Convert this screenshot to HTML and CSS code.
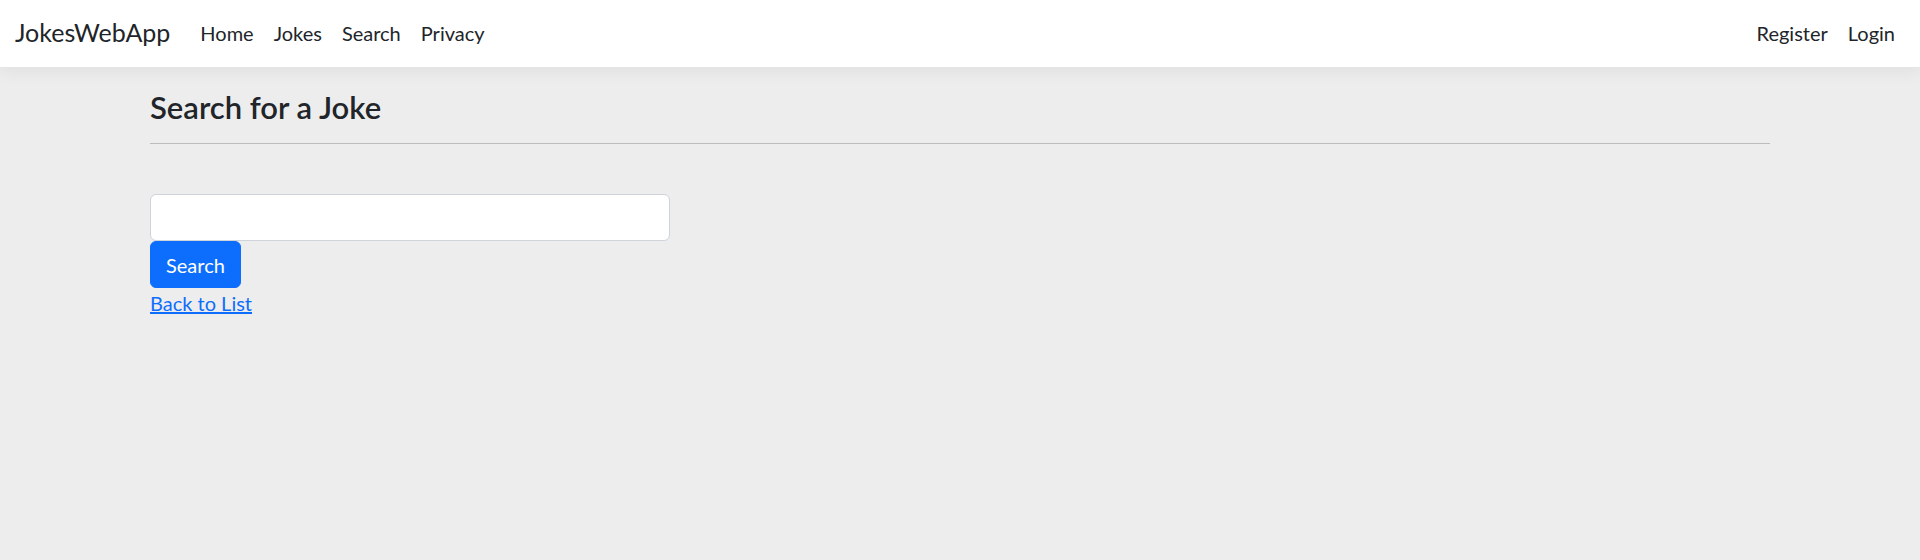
FILE: index.html
```html
<!DOCTYPE html>
<html lang="en">
<head>
<meta charset="utf-8">
<title>Search - JokesWebApp</title>
<link rel="stylesheet" href="styles.css">
</head>
<body>
<header class="navbar">
  <a class="brand" href="#">JokesWebApp</a>
  <nav class="nav-main">
    <a class="nav-link" href="#">Home</a>
    <a class="nav-link" href="#">Jokes</a>
    <a class="nav-link" href="#">Search</a>
    <a class="nav-link" href="#">Privacy</a>
  </nav>
  <nav class="nav-user">
    <a class="nav-link" href="#">Register</a>
    <a class="nav-link" href="#">Login</a>
  </nav>
</header>
<main class="container">
  <h4 class="title">Search for a Joke</h4>
  <hr class="rule">
  <form class="search-form">
    <input class="form-control" type="text" name="SearchPhrase">
    <button class="btn-primary" type="submit">Search</button>
  </form>
  <a class="back-link" href="#">Back to List</a>
</main>
</body>
</html>
```

FILE: styles.css
```css
* { box-sizing: border-box; }
html, body { margin: 0; padding: 0; }
body {
  background: #ededed;
  color: #212529;
  font-family: "Segoe UI", Lato, "Liberation Sans", Arial, sans-serif;
  font-size: 20px;
  line-height: 1.5;
}
.navbar {
  display: flex;
  align-items: center;
  height: 68px;
  padding: 0 15px 2px;
  background: #fff;
  box-shadow: 0 5px 15px rgba(0,0,0,.05);
  border-bottom: 1px solid #e5e5e5;
}
.brand {
  font-size: 25px;
  color: #212529;
  text-decoration: none;
  margin-right: 20px;
  line-height: 1.5;
}
.nav-main { display: flex; flex: 1; }
.nav-user { display: flex; }
.nav-link {
  color: #212529;
  text-decoration: none;
  padding: 8px 10px;
}
.container {
  width: 1650px;
  margin: 0 auto;
  padding: 21px 15px 0;
}
.title {
  margin: 0 0 10px;
  font-size: 31px;
  font-weight: 600;
  line-height: 36px;
}
.rule {
  margin: 18px 0 50px;
  border: 0;
  border-top: 1px solid #bcbcbc;
}
.search-form { display: flex; flex-direction: column; align-items: flex-start; }
.form-control {
  width: 520px;
  height: 47px;
  border: 1px solid #ced4da;
  border-radius: 6px;
  background: #fff;
  font: inherit;
  padding: 7px 15px;
}
.btn-primary {
  height: 47px;
  padding: 0 15px;
  border: 1px solid #0d6efd;
  border-radius: 6px;
  background: #0d6efd;
  color: #fff;
  font: inherit;
}
.back-link { color: #0d6efd; text-decoration: underline; }
```
